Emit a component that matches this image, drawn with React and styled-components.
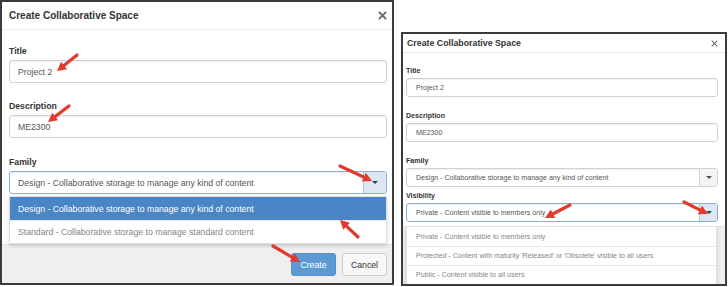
import React from "react";
import styled, { createGlobalStyle, css } from "styled-components";

const Global = createGlobalStyle`
  html, body { margin: 0; padding: 0; background: #fff; }
  body { font-family: "Liberation Sans", Arial, sans-serif; }
  * { box-sizing: border-box; }
`;

const Page = styled.div`
  position: relative;
  width: 728px;
  height: 287px;
  overflow: hidden;
  display: flex;
  align-items: flex-start;
`;

const Dialog = styled.div`
  position: relative;
  display: flex;
  flex-direction: column;
  width: ${(p) => p.$w}px;
  height: ${(p) => p.$h}px;
  margin-top: ${(p) => p.$top}px;
  margin-left: ${(p) => p.$left}px;
  border: 2px solid #3b3b3b;
  background: #fff;
  overflow: hidden;
  flex: none;
`;

const Header = styled.div`
  display: flex;
  align-items: center;
  justify-content: space-between;
  height: ${(p) => p.$h}px;
  padding: 0 ${(p) => p.$pr}px 0 ${(p) => p.$pl}px;
  border-bottom: 1px solid #ececec;
  font-size: ${(p) => p.$fs}px;
  font-weight: bold;
  color: #333;
  flex: none;
`;

const Close = styled.svg`
  display: block;
`;

const Body = styled.div`
  padding: ${(p) => p.$pt}px ${(p) => p.$pr}px 0 ${(p) => p.$pl}px;
  flex: none;
`;

const Field = styled.div`
  position: relative;
  margin-bottom: ${(p) => p.$gap}px;
`;

const Label = styled.div`
  font-weight: bold;
  font-size: ${(p) => p.$fs}px;
  line-height: ${(p) => p.$lh}px;
  margin-bottom: ${(p) => p.$mb}px;
  color: #333;
`;

const Input = styled.div`
  display: flex;
  align-items: center;
  height: ${(p) => p.$h}px;
  padding-left: ${(p) => p.$pad}px;
  border: 1px solid ${(p) => (p.$focus ? "#86aed8" : "#d2d2d2")};
  border-radius: 3px;
  box-shadow: inset 0 1px 1px rgba(0, 0, 0, 0.06);
  font-size: ${(p) => p.$fs}px;
  color: #555;
  overflow: hidden;
  white-space: nowrap;
`;

const SelectText = styled.span`
  flex: 1;
`;

const CaretBox = styled.div`
  align-self: stretch;
  width: ${(p) => p.$w}px;
  display: flex;
  align-items: center;
  justify-content: center;
  border-left: 1px solid ${(p) => (p.$focus ? "#a9c3de" : "#d2d2d2")};
  background: ${(p) => (p.$focus ? "#dce7f2" : "#f4f4f4")};
`;

const Caret = styled.span`
  width: 0;
  height: 0;
  border-left: ${(p) => p.$s}px solid transparent;
  border-right: ${(p) => p.$s}px solid transparent;
  border-top: ${(p) => p.$s}px solid ${(p) => (p.$focus ? "#244466" : "#555")};
`;

const List = styled.div`
  background: #fff;
  border: 1px solid #e0e0e0;
  box-shadow: 0 2px 4px rgba(0, 0, 0, 0.15);
  ${(p) =>
    p.$overlay
      ? css`
          position: absolute;
          left: 0;
          right: 1px;
          top: calc(100% + 4px);
          z-index: 2;
        `
      : css`
          margin-top: 2px;
        `}
`;

const Option = styled.div`
  display: flex;
  align-items: center;
  height: ${(p) => p.$h}px;
  padding-left: ${(p) => p.$pad}px;
  font-size: ${(p) => p.$fs}px;
  white-space: nowrap;
  color: ${(p) => (p.$active ? "#fff" : "#858585")};
  background: ${(p) => (p.$active ? "#4a85c5" : "#fff")};
  & + & {
    border-top: 1px solid ${(p) => (p.$sep ? "#e8e8e8" : "transparent")};
  }
`;

const Footer = styled.div`
  flex: 1;
  display: flex;
  justify-content: flex-end;
  align-items: flex-start;
  gap: 6px;
  padding: ${(p) => p.$pt}px 5px 0 0;
  background: #efefef;
  border-top: 1px solid #e3e3e3;
`;

const Button = styled.div`
  width: 45px;
  height: 23px;
  display: flex;
  align-items: center;
  justify-content: center;
  border-radius: 3px;
  font-size: 8.7px;
  ${(p) =>
    p.$primary
      ? css`
          background: #5c9ad6;
          border: 1px solid #5591cc;
          color: #fff;
        `
      : css`
          background: #f7f7f7;
          border: 1px solid #cdcdcd;
          color: #333;
        `}
`;

const Overlay = styled.svg`
  position: absolute;
  left: 0;
  top: 0;
  pointer-events: none;
  z-index: 5;
`;

const Arrow = ({ x1, y1, x2, y2 }) => {
  const dx = x2 - x1;
  const dy = y2 - y1;
  const len = Math.hypot(dx, dy);
  const ux = dx / len;
  const uy = dy / len;
  const hl = 9;
  const hw = 4.8;
  const bx = x2 - ux * hl;
  const by = y2 - uy * hl;
  const px = -uy;
  const py = ux;
  const pts = `${x2},${y2} ${bx + px * hw},${by + py * hw} ${bx - px * hw},${by - py * hw}`;
  return (
    <g>
      <line
        x1={x1}
        y1={y1}
        x2={bx + ux * 2}
        y2={by + uy * 2}
        stroke="#e23a2e"
        strokeWidth="3.2"
        strokeLinecap="round"
      />
      <polygon points={pts} fill="#e23a2e" />
    </g>
  );
};

const CloseIcon = ({ size, w }) => (
  <Close width={size} height={size} viewBox="0 0 10 10">
    <path d="M1 1 L9 9 M9 1 L1 9" stroke="#6b6b6b" strokeWidth={w} strokeLinecap="butt" />
  </Close>
);

const L = { fs: 8.7, lh: 12, mb: 3, h: 23, pad: 8, caret: 23, cs: 3.6 };
const R = { fs: 7.1, lh: 10, mb: 2, h: 19, pad: 9, caret: 18, cs: 3 };

const SelectBox = ({ s, text, focus }) => (
  <Input $h={s.h} $pad={s.pad} $fs={s.fs} $focus={focus}>
    <SelectText>{text}</SelectText>
    <CaretBox $w={s.caret} $focus={focus}>
      <Caret $s={s.cs} $focus={focus} />
    </CaretBox>
  </Input>
);

const design = "Design - Collaborative storage to manage any kind of content";

export default function App() {
  return (
    <Page>
      <Global />
      <Dialog $w={394} $h={285} $top={0} $left={0}>
        <Header $h={28} $fs={10} $pl={7} $pr={5}>
          <span>Create Collaborative Space</span>
          <CloseIcon size={9} w={2.2} />
        </Header>
        <Body $pt={15} $pl={7} $pr={5}>
          <Field $gap={17}>
            <Label $fs={L.fs} $lh={L.lh} $mb={L.mb}>Title</Label>
            <Input $h={L.h} $pad={L.pad} $fs={L.fs}>Project 2</Input>
          </Field>
          <Field $gap={18}>
            <Label $fs={L.fs} $lh={L.lh} $mb={L.mb}>Description</Label>
            <Input $h={L.h} $pad={L.pad} $fs={L.fs}>ME2300</Input>
          </Field>
          <Field $gap={0}>
            <Label $fs={L.fs} $lh={L.lh} $mb={L.mb}>Family</Label>
            <SelectBox s={L} text={design} focus />
            <List>
              <Option $h={23} $pad={L.pad} $fs={L.fs} $active>
                {design}
              </Option>
              <Option $h={23} $pad={L.pad} $fs={L.fs}>
                Standard - Collaborative storage to manage standard content
              </Option>
            </List>
          </Field>
        </Body>
        <Footer $pt={8}>
          <Button $primary>Create</Button>
          <Button>Cancel</Button>
        </Footer>
      </Dialog>

      <Dialog $w={326} $h={254} $top={32} $left={7}>
        <Header $h={19} $fs={8.8} $pl={4} $pr={7}>
          <span>Create Collaborative Space</span>
          <CloseIcon size={7} w={1.6} />
        </Header>
        <Body $pt={13} $pl={3} $pr={7}>
          <Field $gap={14}>
            <Label $fs={R.fs} $lh={R.lh} $mb={R.mb}>Title</Label>
            <Input $h={R.h} $pad={R.pad} $fs={R.fs}>Project 2</Input>
          </Field>
          <Field $gap={14}>
            <Label $fs={R.fs} $lh={R.lh} $mb={R.mb}>Description</Label>
            <Input $h={R.h} $pad={R.pad} $fs={R.fs}>ME2300</Input>
          </Field>
          <Field $gap={4}>
            <Label $fs={R.fs} $lh={R.lh} $mb={R.mb}>Family</Label>
            <SelectBox s={R} text={design} />
          </Field>
          <Field $gap={4}>
            <Label $fs={R.fs} $lh={R.lh} $mb={R.mb}>Visibility</Label>
            <SelectBox s={R} text="Private - Content visible to members only" focus />
            <List $overlay>
              <Option $h={19} $pad={R.pad} $fs={R.fs} $sep>
                Private - Content visible to members only
              </Option>
              <Option $h={19} $pad={R.pad} $fs={R.fs} $sep>
                Protected - Content with maturity 'Released' or 'Obsolete' visible to all users
              </Option>
              <Option $h={19} $pad={R.pad} $fs={R.fs} $sep>
                Public - Content visible to all users
              </Option>
            </List>
          </Field>
        </Body>
        <Footer $pt={8} />
      </Dialog>

      <Overlay width="728" height="287" viewBox="0 0 728 287">
        <Arrow x1={77} y1={55} x2={57} y2={71} />
        <Arrow x1={69} y1={106} x2={48} y2={122} />
        <Arrow x1={340} y1={166} x2={372} y2={181} />
        <Arrow x1={358} y1={237} x2={340} y2={220} />
        <Arrow x1={273} y1={246} x2={300} y2={262} />
        <Arrow x1={570} y1={205} x2={545} y2={218} />
        <Arrow x1={684} y1={202} x2={708} y2={214} />
      </Overlay>
    </Page>
  );
}
